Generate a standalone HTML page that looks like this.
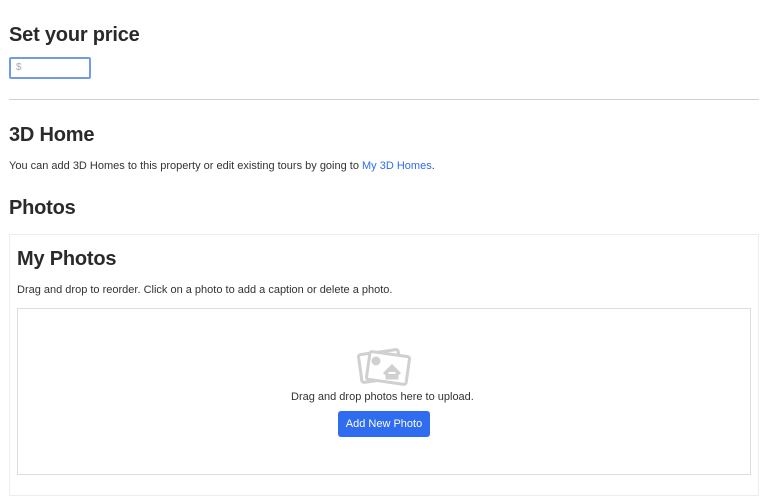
<!DOCTYPE html>
<html><head><style>
body{margin:0;background:#fff;font-family:"Liberation Sans",sans-serif;color:#333;width:768px;height:479px;overflow:hidden;position:relative}
.a{position:absolute;white-space:nowrap}
h{position:absolute;font-weight:bold;font-size:20px;color:#2a2a2a;white-space:nowrap;letter-spacing:-0.2px}
.t{font-size:11px;color:#333}
</style></head><body>
<h style="left:9px;top:24px">Set your price</h>
<div class="a" style="left:9px;top:57px;width:78px;height:18px;border:2px solid #6f9be8;border-radius:2px"></div>
<div class="a" style="left:16px;top:62px;font-size:10px;color:#aaa">$</div>
<div class="a" style="left:9px;top:99px;width:750px;height:1px;background:#cfcfcf"></div>
<h style="left:9px;top:124px">3D Home</h>
<div class="a t" style="left:9px;top:160px">You can add 3D Homes to this property or edit existing tours by going to <span style="color:#2f6cf0">My 3D Homes</span>.</div>
<h style="left:9px;top:197px">Photos</h>
<div class="a" style="left:9px;top:234px;width:748px;height:260px;border:1px solid #eee"></div>
<h style="left:17px;top:248px">My Photos</h>
<div class="a t" style="left:17px;top:284px">Drag and drop to reorder. Click on a photo to add a caption or delete a photo.</div>
<div class="a" style="left:17px;top:308px;width:732px;height:165px;border:1px solid #ddd"></div>
<svg class="a" style="left:356px;top:344px" width="56" height="44" viewBox="0 0 56 44" fill="none" stroke="#d0d0d0" stroke-width="3">
<rect x="4" y="8" width="40" height="28" rx="2" transform="rotate(-8 24 22)"/>
<rect x="12" y="10" width="40" height="28" rx="2" transform="rotate(8 32 24)" fill="#fff"/>
<circle cx="20" cy="17" r="3" fill="#d0d0d0"/>
<path d="M28 30 L36 22 L44 30 M31 28 V34 H41 V28" fill="#d0d0d0"/>
</svg>
<div class="a t" style="left:291px;top:391px">Drag and drop photos here to upload.</div>
<div class="a" style="left:338px;top:411px;width:92px;height:26px;background:#2f6cf0;border-radius:3px;color:#fff;font-size:11px;line-height:27px;text-align:center">Add New Photo</div>
</body></html>
